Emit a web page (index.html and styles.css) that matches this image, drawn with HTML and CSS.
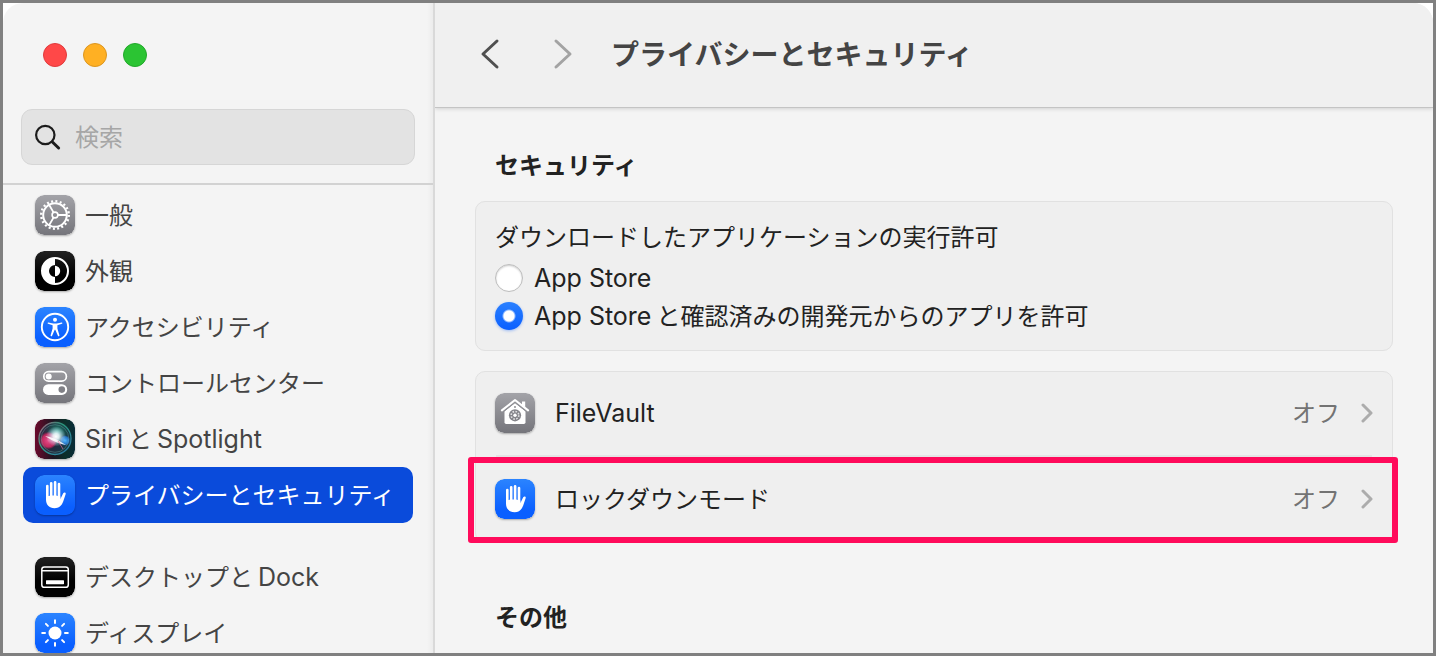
FILE: index.html
```html
<!DOCTYPE html>
<html lang="ja">
<head>
<meta charset="utf-8">
<title>プライバシーとセキュリティ</title>
<link rel="stylesheet" href="styles.css">
</head>
<body>
<svg class="defs" width="0" height="0" aria-hidden="true">
  <defs>
    <linearGradient id="gray" x1="0" y1="0" x2="0" y2="1"><stop offset="0" stop-color="#a3a3a8"/><stop offset="1" stop-color="#75757b"/></linearGradient>
    <linearGradient id="black" x1="0" y1="0" x2="0" y2="1"><stop offset="0" stop-color="#222"/><stop offset=".6" stop-color="#000"/></linearGradient>
    <linearGradient id="blue" x1="0" y1="0" x2="0" y2="1"><stop offset="0" stop-color="#2b84ff"/><stop offset=".8" stop-color="#0a5fff"/></linearGradient>
    <linearGradient id="siri-bg" x1="0" y1="0" x2="1" y2="0"><stop offset="0" stop-color="#6b0a2c"/><stop offset=".45" stop-color="#1c1420"/><stop offset=".75" stop-color="#0c2f2a"/><stop offset="1" stop-color="#092c38"/></linearGradient>
    <linearGradient id="siri-ring" x1="0" y1="0" x2="1" y2="1"><stop offset="0" stop-color="#b0567a"/><stop offset=".4" stop-color="#2fa184"/><stop offset="1" stop-color="#2b70a8"/></linearGradient>
    <radialGradient id="siri-red"><stop offset="0" stop-color="#e8508a"/><stop offset=".75" stop-color="#d92a66" stop-opacity=".85"/><stop offset="1" stop-color="#c01850" stop-opacity=".2"/></radialGradient>
    <radialGradient id="siri-green"><stop offset="0" stop-color="#2fae8c"/><stop offset="1" stop-color="#0d5f4e" stop-opacity="0"/></radialGradient>
    <radialGradient id="siri-blue"><stop offset="0" stop-color="#4fb9ff"/><stop offset=".7" stop-color="#2a7fe0" stop-opacity=".8"/><stop offset="1" stop-color="#16439a" stop-opacity="0"/></radialGradient>
    <radialGradient id="siri-glow"><stop offset="0" stop-color="#fff"/><stop offset=".3" stop-color="#f0faff" stop-opacity=".9"/><stop offset="1" stop-color="#b8dcff" stop-opacity="0"/></radialGradient>
    <symbol id="hand" viewBox="0 0 40 40">
      <rect width="40" height="40" rx="9" fill="url(#blue)"/>
      <g stroke="#fff" stroke-width="2.6" stroke-linecap="round">
        <path d="M12.3 11V24M16.2 8.3V23M20.1 7.3V23M24 9.1V24"/>
      </g>
      <path d="M11 21.5L16.2 20.4H21L25.3 21.5V24.2L28.2 18.3C29 16.8 31.2 17.3 30.7 19.1L28.2 26.6C26.6 31 23.8 33.2 19.6 33.2C14 33.2 11 29.5 11 24.5Z" fill="#fff"/>
    </symbol>
  </defs>
</svg>

<div class="window">
  <aside class="sidebar">
    <div class="sidebar-top">
      <div class="lights">
        <button class="light close" aria-label="閉じる"></button>
        <button class="light minimize" aria-label="しまう"></button>
        <button class="light expand" aria-label="拡大"></button>
      </div>
      <label class="search">
        <svg width="28" height="28" viewBox="0 0 28 28" fill="none" stroke="#1c1c1c" stroke-linecap="round"><circle cx="11.3" cy="12" r="9.2" stroke-width="2.2"/><path d="M18.4 19L24.6 25" stroke-width="3"/></svg>
        <input type="search" placeholder="検索" aria-label="検索">
      </label>
    </div>
    <nav class="nav">
      <div class="group">
        <a class="item" href="#general">
          <svg class="icon" viewBox="0 0 40 40"><rect width="40" height="40" rx="9" fill="url(#gray)"/><g fill="none" stroke="#fff"><circle cx="20" cy="20" r="13.8" stroke-width="2.4" stroke-dasharray="2 2.335"/><circle cx="20" cy="20" r="11.8" stroke-width="2"/><circle cx="20" cy="20" r="2.9" stroke-width="1.6"/><path d="M23 20H31.5M18.5 17.4L14.1 9.8M18.5 22.6L14.1 30.2" stroke-width="1.8"/></g></svg>
          <span class="text">一般</span>
        </a>
        <a class="item" href="#appearance">
          <svg class="icon" viewBox="0 0 40 40"><rect width="40" height="40" rx="9" fill="url(#black)"/><circle cx="20" cy="20" r="13" fill="none" stroke="#fff" stroke-width="2"/><path d="M20 7A13 13 0 0 0 20 33V26A6 6 0 0 1 20 14ZM20 14.8A5.2 5.2 0 0 1 20 25.2Z" fill="#fff"/></svg>
          <span class="text">外観</span>
        </a>
        <a class="item" href="#accessibility">
          <svg class="icon" viewBox="0 0 40 40"><rect width="40" height="40" rx="9" fill="url(#blue)"/><circle cx="20" cy="20" r="13.2" fill="none" stroke="#fff" stroke-width="1.9"/><circle cx="20" cy="12.7" r="2" fill="#fff"/><path d="M13.4 15.4L18.2 16.5H21.8L26.6 15.4C27.5 15.3 27.7 16.5 26.9 16.8L22.4 18.2V21.4L24.4 28.2C24.6 29.2 23.3 29.6 22.9 28.7L20.3 22.8H19.7L17.1 28.7C16.7 29.6 15.4 29.2 15.6 28.2L17.6 21.4V18.2L13.1 16.8C12.3 16.5 12.5 15.3 13.4 15.4Z" fill="#fff"/></svg>
          <span class="text">アクセシビリティ</span>
        </a>
        <a class="item" href="#control-center">
          <svg class="icon" viewBox="0 0 40 40"><rect width="40" height="40" rx="9" fill="url(#gray)"/><rect x="8.8" y="8.7" width="22.6" height="9.4" rx="4.7" fill="none" stroke="#fff" stroke-width="1.7"/><circle cx="13.7" cy="13.4" r="3" fill="#fff"/><rect x="8" y="21.3" width="24.2" height="10.6" rx="5.3" fill="#fff"/><circle cx="26.8" cy="26.6" r="3.3" fill="#808086"/></svg>
          <span class="text">コントロールセンター</span>
        </a>
        <a class="item" href="#siri">
          <svg class="icon" viewBox="0 0 40 40"><rect width="40" height="40" rx="9" fill="url(#siri-bg)"/><circle cx="20" cy="19.5" r="16" fill="#24405a" fill-opacity=".55" stroke="url(#siri-ring)" stroke-width="1.3"/><circle cx="22" cy="13" r="12" fill="url(#siri-green)"/><circle cx="13.5" cy="21.5" r="8.5" fill="url(#siri-red)"/><circle cx="30" cy="21.5" r="5.5" fill="url(#siri-blue)"/><circle cx="20" cy="19.5" r="13.8" fill="none" stroke="#7fd3c4" stroke-opacity=".35" stroke-width=".9"/><circle cx="21" cy="17.5" r="10" fill="url(#siri-glow)"/><path d="M10 17Q19 18 31 26Q22 25 10 17Z" fill="#fff" fill-opacity=".85"/><path d="M23 22L28 30" stroke="#e06a9c" stroke-opacity=".7"/></svg>
          <span class="text"><span class="latin">Siri</span><span class="gap"></span>と<span class="gap"></span><span class="latin">Spotlight</span></span>
        </a>
        <a class="item selected" href="#privacy" aria-current="page">
          <svg class="icon"><use href="#hand"/></svg>
          <span class="text">プライバシーとセキュリティ</span>
        </a>
      </div>
      <div class="group">
        <a class="item" href="#dock">
          <svg class="icon" viewBox="0 0 40 40"><rect width="40" height="40" rx="9" fill="url(#black)"/><rect x="6.8" y="10" width="26.5" height="20.3" rx="2.6" fill="none" stroke="#fff" stroke-width="1.5"/><path d="M7 13.7H33" stroke="#fff" stroke-width="1.5"/><rect x="11" y="23.2" width="18" height="4" rx=".6" fill="#fff"/></svg>
          <span class="text">デスクトップと<span class="gap"></span><span class="latin">Dock</span></span>
        </a>
        <a class="item" href="#display">
          <svg class="icon" viewBox="0 0 40 40"><rect width="40" height="40" rx="9" fill="url(#blue)"/><circle cx="20" cy="20" r="6.5" fill="#fff"/><path d="M20 7.2V10M20 30V32.8M7.2 20H10M30 20H32.8M10.9 10.9L12.9 12.9M27.1 27.1L29.1 29.1M10.9 29.1L12.9 27.1M27.1 12.9L29.1 10.9" stroke="#fff" stroke-width="2" stroke-linecap="round"/></svg>
          <span class="text">ディスプレイ</span>
        </a>
      </div>
    </nav>
  </aside>

  <main class="main">
    <header class="toolbar">
      <button class="arrow" aria-label="戻る"><svg width="20" height="32" viewBox="0 0 20 32"><path d="M17 3L3 16L17 29"/></svg></button>
      <button class="arrow forward" aria-label="進む" disabled><svg width="20" height="32" viewBox="0 0 20 32"><path d="M3 3L17 16L3 29"/></svg></button>
      <h1>プライバシーとセキュリティ</h1>
    </header>
    <div class="content">
      <h2>セキュリティ</h2>
      <fieldset class="card choices">
        <legend>ダウンロードしたアプリケーションの実行許可</legend>
        <label class="choice"><input type="radio" name="allow"><span class="text"><span class="latin">App Store</span></span></label>
        <label class="choice"><input type="radio" name="allow" checked><span class="text"><span class="latin">App Store</span><span class="gap"></span>と確認済みの開発元からのアプリを許可</span></label>
      </fieldset>
      <div class="card rows">
        <button class="row">
          <svg class="icon" viewBox="0 0 40 40"><rect width="40" height="40" rx="9" fill="url(#gray)"/><path d="M6.9 17.4L20 7L33.1 17.4" fill="none" stroke="#fff" stroke-width="2.1" stroke-linecap="round" stroke-linejoin="round"/><path d="M27 8.5H30.2V14.4L27 11.9Z" fill="#fff"/><path d="M20 10L30.5 18.3V29.3Q30.5 31 28.8 31H11.2Q9.5 31 9.5 29.3V18.3Z" fill="#fff"/><path d="M9 18.3L20 9.6L31 18.3" fill="none" stroke="#8f8f94" stroke-width="1"/><circle cx="20" cy="22.3" r="6.1" fill="#85858a"/><circle cx="20" cy="22.3" r="3.8" fill="none" stroke="#fff" stroke-opacity=".75" stroke-width="1.6" stroke-dasharray="1.6 1.38"/><circle cx="20" cy="22.3" r="1.7" fill="#fff"/><circle cx="20" cy="14" r=".9" fill="#85858a"/></svg>
          <span class="name"><span class="latin">FileVault</span></span>
          <span class="state">オフ</span>
          <svg class="chevron" viewBox="0 0 12 20"><path d="M2 2L10 10L2 18"/></svg>
        </button>
        <button class="row highlighted">
          <svg class="icon"><use href="#hand"/></svg>
          <span class="name">ロックダウンモード</span>
          <span class="state">オフ</span>
          <svg class="chevron" viewBox="0 0 12 20"><path d="M2 2L10 10L2 18"/></svg>
        </button>
      </div>
      <h2>その他</h2>
    </div>
  </main>
</div>
</body>
</html>
```
FILE: styles.css
```css
* { box-sizing: border-box; }

body {
  margin: 0;
  background: #fff;
  color: #222;
  font-family: Inter, "Noto Sans CJK JP", sans-serif;
  font-size: 24px;
  line-height: 36px;
}

button {
  padding: 0;
  border: 0;
  background: none;
  color: inherit;
  font: inherit;
}

.defs { position: absolute; }

.latin { font-size: 25px; line-height: 1; }

.gap { margin-left: 5px; }

.window {
  display: flex;
  height: 100vh;
  border: 3px solid #808080;
  background: #fff;
  overflow: hidden;
}

.sidebar {
  display: flex;
  flex-direction: column;
  flex: 0 0 432px;
  min-width: 0;
  border-right: 2px solid #d9d9d9;
  border-top-left-radius: 20px;
  background: linear-gradient(to left, #ececec, #f4f4f4 6px);
}

.sidebar-top {
  padding: 40px 18px 18px;
  border-bottom: 2px solid #d2d2d2;
}

.lights {
  display: flex;
  gap: 16px;
  padding-left: 22px;
  margin-bottom: 42px;
}

.light {
  width: 24px;
  height: 24px;
  border: 1px solid;
  border-radius: 50%;
}

.close { background: #ff4848; border-color: #e03a3c; }
.minimize { background: #ffb023; border-color: #dc9620; }
.expand { background: #2bc433; border-color: #21a82a; }

.search {
  display: flex;
  align-items: center;
  gap: 13px;
  height: 56px;
  padding: 0 12px;
  border: 1px solid #d6d6d6;
  border-radius: 11px;
  background: #e3e3e3;
}

.search input {
  flex: 1;
  min-width: 0;
  padding: 2px 0 0;
  border: 0;
  outline: 0;
  background: none;
  color: #222;
  font: inherit;
}

.search input::placeholder { color: #a6a6a6; opacity: 1; }

.nav {
  flex: 1;
  min-height: 0;
  padding: 2px 20px 0;
  overflow: hidden;
}

.group { margin-bottom: 26px; }

.item {
  display: flex;
  align-items: center;
  gap: 10px;
  height: 56px;
  padding: 0 12px;
  border-radius: 10px;
  color: #444;
  text-decoration: none;
  white-space: nowrap;
}

.text { padding-top: 2px; }

.selected { background: #0a4bdb; color: #fff; }

.icon {
  flex: none;
  width: 40px;
  height: 40px;
  border-radius: 9px;
  box-shadow: 0 1px 2px rgba(0, 0, 0, .3);
}

.main {
  flex: 1;
  min-width: 0;
  border-top-right-radius: 20px;
  background: #f4f4f4;
  overflow: hidden;
}

.toolbar {
  display: flex;
  align-items: center;
  height: 105px;
  padding: 0 45px 2px;
  border-bottom: 1px solid #c4c4c4;
  background: #f0f0f0;
  box-shadow: 0 1px 4px rgba(0, 0, 0, .14);
}

.arrow {
  display: flex;
  margin-right: 53px;
}

.arrow path, .chevron path {
  fill: none;
  stroke: #505050;
  stroke-width: 3;
  stroke-linecap: round;
  stroke-linejoin: round;
}

.forward { margin-right: 38px; }
.forward path { stroke: #a3a3a3; }

h1 {
  margin: 0;
  padding-top: 2px;
  color: #444;
  font-size: 28px;
  font-weight: 700;
  line-height: 40px;
  white-space: nowrap;
}

.content { padding: 40px; }

h2 {
  margin: 0 20px 17px;
  font-size: 24px;
  font-weight: 700;
  line-height: 36px;
}

.card {
  margin: 0 0 20px;
  border: 1px solid #e1e1e1;
  border-radius: 10px;
  background: #efefef;
}

.choices {
  display: flex;
  flex-direction: column;
  padding: 18px 19px 15px;
}

legend {
  float: left;
  padding: 0;
  margin-bottom: 3px;
}

.choice {
  display: flex;
  align-items: center;
  gap: 11px;
  height: 38px;
}

.choice input {
  flex: none;
  width: 28px;
  height: 28px;
  margin: 0;
  appearance: none;
  border: 1px solid #bdbdbd;
  border-radius: 50%;
  background: #fff;
  box-shadow: inset 0 1px 2px rgba(0, 0, 0, .2);
}

.choice input:checked {
  border: 0;
  background: radial-gradient(circle, #fff 5px, transparent 7px), linear-gradient(#2a80ff, #0a5fff);
  box-shadow: 0 1px 3px rgba(10, 95, 255, .35);
}

.rows { margin-bottom: 57px; }

.row {
  position: relative;
  display: flex;
  align-items: center;
  width: 100%;
  height: 82px;
  padding: 0 19px;
  text-align: left;
}

.row + .row { height: 88px; padding-top: 2px; }

.row + .row::before {
  content: "";
  position: absolute;
  inset: 1px 20px auto;
  height: 2px;
  background: #e4e4e4;
}

.highlighted::after {
  content: "";
  position: absolute;
  inset: 3px -6px -1px -8px;
  border: 6px solid #ff0b5b;
  border-radius: 3px;
}

.name { flex: 1; margin-left: 20px; padding-top: 2px; }

.state { padding-top: 2px; color: #737373; margin-right: 21px; }

.chevron { width: 12px; height: 20px; }
.chevron path { stroke: #acacac; }
```
